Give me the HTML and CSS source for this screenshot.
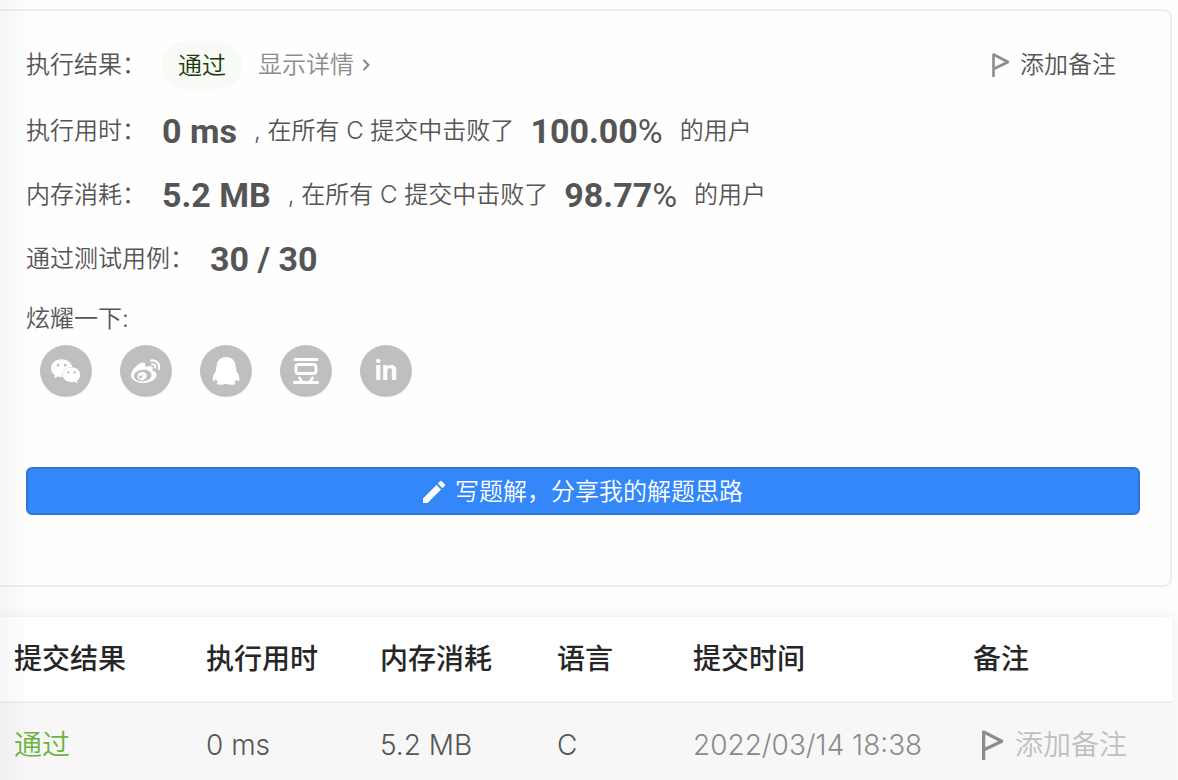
FILE: index.html
```html
<!DOCTYPE html>
<html lang="zh-CN">
<head>
    <meta charset="UTF-8">
    <meta name="viewport" content="width=device-width, initial-scale=1.0">
    <title>提交记录</title>
    <link rel="stylesheet" href="styles.css">
</head>
<body>
    <section class="result-card">
        <div class="result-header">
            <span class="label">执行结果：</span>
            <span class="status">通过</span>
            <a class="detail-link" href="#">显示详情
                <svg width="8" height="12" viewBox="0 0 8 12"><path d="M1.5 1l5 5-5 5"/></svg>
            </a>
            <button class="note-button" type="button">
                <svg class="flag" viewBox="0 0 18 24"><path d="M1.5 24V1.5L16 9 1.5 16"/></svg>
                添加备注
            </button>
        </div>

        <div class="result-row">
            <span class="label">执行用时：</span>
            <strong class="value">0 ms</strong>
            <span class="text">, 在所有 C 提交中击败了</span>
            <strong class="value">100.00<span class="percent">%</span></strong>
            <span>的用户</span>
        </div>
        <div class="result-row">
            <span class="label">内存消耗：</span>
            <strong class="value">5.2 MB</strong>
            <span class="text">, 在所有 C 提交中击败了</span>
            <strong class="value">98.77<span class="percent">%</span></strong>
            <span>的用户</span>
        </div>
        <div class="result-row">
            <span class="label cases">通过测试用例：</span>
            <strong class="value">30 / 30</strong>
        </div>

        <p class="share-title">炫耀一下:</p>
        <div class="share-list">
            <a class="share-item" href="#" aria-label="微信">
                <svg viewBox="0 0 52 52"><path transform="translate(11 11.5) scale(1.22)" d="M8.691 2.188C3.891 2.188 0 5.476 0 9.53c0 2.212 1.17 4.203 3.002 5.55a.59.59 0 0 1 .213.665l-.39 1.48c-.019.07-.048.141-.048.213 0 .163.13.295.29.295a.326.326 0 0 0 .167-.054l1.903-1.114a.864.864 0 0 1 .717-.098 10.16 10.16 0 0 0 2.837.403c.276 0 .543-.027.811-.05-.857-2.578.157-4.972 1.932-6.446 1.703-1.415 3.882-1.98 5.853-1.838-.576-3.583-4.196-6.348-8.596-6.348zM5.785 5.991c.642 0 1.162.529 1.162 1.18a1.17 1.17 0 0 1-1.162 1.178A1.17 1.17 0 0 1 4.623 7.17c0-.651.52-1.18 1.162-1.18zm5.813 0c.642 0 1.162.529 1.162 1.18a1.17 1.17 0 0 1-1.162 1.178 1.17 1.17 0 0 1-1.162-1.178c0-.651.52-1.18 1.162-1.18zm5.34 2.867c-1.797-.052-3.746.512-5.28 1.786-1.72 1.428-2.687 3.72-1.78 6.22.942 2.453 3.666 4.229 6.884 4.229.826 0 1.622-.12 2.361-.336a.722.722 0 0 1 .598.082l1.584.926a.272.272 0 0 0 .14.047c.134 0 .24-.111.24-.247 0-.06-.023-.12-.038-.177l-.327-1.233a.582.582 0 0 1-.023-.156.49.49 0 0 1 .201-.398C23.024 18.48 24 16.82 24 14.98c0-3.21-2.931-5.837-6.656-6.088V8.89c-.135-.01-.27-.027-.407-.03zm-2.53 3.274c.535 0 .969.44.969.982a.976.976 0 0 1-.969.983.976.976 0 0 1-.969-.983c0-.542.434-.982.97-.982zm4.844 0c.535 0 .969.44.969.982a.976.976 0 0 1-.969.983.976.976 0 0 1-.969-.983c0-.542.434-.982.969-.982z"/></svg>
            </a>
            <a class="share-item" href="#" aria-label="微博">
                <svg viewBox="0 0 52 52"><path transform="translate(11 11.5) scale(1.22)" d="M10.098 20.323c-3.977.391-7.414-1.406-7.672-4.02-.259-2.609 2.759-5.047 6.74-5.441 3.979-.394 7.413 1.404 7.671 4.018.259 2.6-2.759 5.049-6.737 5.439l-.002.004zM9.05 17.219c-.384.616-1.208.884-1.829.602-.612-.279-.793-.991-.406-1.593.379-.595 1.176-.861 1.793-.601.622.263.82.972.442 1.592zm1.27-1.627c-.141.237-.449.353-.689.253-.236-.09-.313-.361-.177-.586.138-.227.436-.346.672-.24.239.09.315.36.18.601l.014-.028zm.176-2.719c-1.893-.493-4.033.45-4.857 2.118-.836 1.704-.026 3.591 1.886 4.21 1.983.64 4.318-.341 5.132-2.179.8-1.793-.201-3.642-2.161-4.149zm7.563-1.224c-.346-.105-.57-.18-.405-.615.375-.977.42-1.804 0-2.404-.781-1.112-2.915-1.053-5.364-.03 0 0-.766.331-.571-.271.376-1.217.315-2.224-.27-2.809-1.338-1.337-4.869.045-7.888 3.08C1.309 10.87 0 13.273 0 15.348c0 3.981 5.099 6.395 10.086 6.395 6.536 0 10.888-3.801 10.888-6.82 0-1.822-1.547-2.854-2.915-3.284v.01zm1.908-5.092c-.766-.856-1.908-1.187-2.96-.962-.436.09-.706.511-.616.932.09.42.511.691.932.602.511-.105 1.067.044 1.442.465.376.421.466.977.316 1.473-.136.406.089.856.51.992.405.119.857-.105.992-.512.33-1.021.12-2.178-.646-3.035l.03.045zm2.418-2.195c-1.576-1.757-3.905-2.419-6.054-1.968-.496.104-.812.587-.706 1.081.104.496.586.813 1.082.707 1.532-.331 3.185.15 4.296 1.383 1.112 1.246 1.429 2.943.947 4.416-.165.48.106 1.007.586 1.157.479.165.991-.104 1.157-.586.675-2.088.241-4.478-1.338-6.235l.03.045z"/></svg>
            </a>
            <a class="share-item" href="#" aria-label="QQ">
                <svg viewBox="0 0 52 52"><path d="M26 12c-5.5 0-9.3 3.8-9.3 9 0 1-.8 1.5-.8 3 0 .8.2 1.2.1 1.8-1.9 2.6-3.2 5.3-3.2 7.9 0 1.6.5 2.5 1 2.5.8 0 1.7-1.3 2.1-2.1.4 1.400 1.200 2.600 2.300 3.600-1.300.5-1.700.7-1.700 1.100.8 1.200 6.900 1.400 9.600-.4 2.700 1.800 8.800 1.600 9.500.3 0-.5-.5-.7-1.600-1.100 1.100-1 1.800-2.100 2.200-3.400.4.8 1.200 2 2 2 .6 0 1.200-.9 1.200-2.500 0-2.600-1.300-5.300-3.200-7.900-.1-.6.1-1 .1-1.800 0-1.500-.8-2-.8-3 0-5.200-3.900-9-9.500-9z"/></svg>
            </a>
            <a class="share-item" href="#" aria-label="豆瓣">
                <svg class="stroke" viewBox="0 0 52 52">
                    <path d="M15 14.500h22"/>
                    <rect x="16" y="19.500" width="20" height="9" rx="2.500"/>
                    <path d="M14.300 37.500h23.400M19.500 33l2.500 4M32.500 33l-2.500 4"/>
                </svg>
            </a>
            <a class="share-item linkedin" href="#">in</a>
        </div>

        <button class="write-button" type="button">
            <svg width="22" height="22" viewBox="3 3 18 18"><path d="M3 17.25V21h3.75L17.81 9.94l-3.75-3.75L3 17.25zM20.71 7.04a1 1 0 0 0 0-1.41l-2.34-2.34a1 1 0 0 0-1.41 0l-1.83 1.83 3.75 3.75 1.83-1.83z"/></svg>
            写题解，分享我的解题思路
        </button>
    </section>

    <table class="submissions">
        <colgroup>
            <col class="col-result">
            <col class="col-time">
            <col class="col-memory">
            <col class="col-lang">
            <col class="col-date">
            <col>
        </colgroup>
        <thead>
            <tr>
                <th>提交结果</th>
                <th>执行用时</th>
                <th>内存消耗</th>
                <th>语言</th>
                <th>提交时间</th>
                <th>备注</th>
            </tr>
        </thead>
        <tbody>
            <tr>
                <td><a class="accepted" href="#">通过</a></td>
                <td>0 ms</td>
                <td>5.2 MB</td>
                <td>C</td>
                <td class="date">2022/03/14 18:38</td>
                <td>
                    <button class="note-button" type="button">
                        <svg class="flag" viewBox="0 0 18 24"><path d="M1.5 24V1.5L16 9 1.5 16"/></svg>
                        添加备注
                    </button>
                </td>
            </tr>
        </tbody>
    </table>
</body>
</html>
```

FILE: styles.css
```css
* {
    margin: 0;
    padding: 0;
    box-sizing: border-box;
}

body {
    padding: 9px 6px 0 0;
    background: #fefefe;
    color: #555;
    font-family: Inter, 'Noto Sans CJK SC', sans-serif;
    font-size: 24px;
    font-weight: 350;
    line-height: 36px;
    overflow: hidden;
}

/* Sombra del panel izquierdo */
body::before {
    content: '';
    position: fixed;
    z-index: 1;
    top: 0;
    bottom: 0;
    left: 0;
    width: 30px;
    background: linear-gradient(to right, rgba(0, 0, 0, 0.03), rgba(0, 0, 0, 0));
    pointer-events: none;
}

a {
    color: inherit;
    text-decoration: none;
}

button {
    border: none;
    background: none;
    color: inherit;
    font: inherit;
    cursor: pointer;
}

.result-card {
    padding: 30px 30px 70px 26px;
    border: 2px solid #eee;
    border-left: none;
    border-radius: 0 8px 8px 0;
}

.result-header {
    display: flex;
    align-items: center;
    height: 48px;
    margin-bottom: 10px;
}

.label {
    width: 136px;
    white-space: nowrap;
}

.label.cases {
    width: 184px;
}

.status {
    padding: 7px 16px 5px;
    border-radius: 24px;
    background: #f7faf5;
    color: #1c3a0a;
}

.detail-link {
    display: flex;
    align-items: center;
    gap: 8px;
    margin-left: 16px;
    color: #8c8c8c;
}

.detail-link svg {
    fill: none;
    stroke: #858585;
    stroke-width: 2;
}

.note-button {
    display: flex;
    align-items: center;
    gap: 10px;
}

.result-header .note-button {
    margin-left: auto;
    margin-right: 24px;
}

.flag {
    width: 18px;
    height: 24px;
    fill: none;
    stroke: #8c8c8c;
    stroke-width: 2.6;
    stroke-linejoin: round;
}

.result-row {
    display: flex;
    align-items: center;
    height: 64px;
    white-space: nowrap;
}

.value {
    margin-right: 17px;
    font-family: Roboto, sans-serif;
    font-size: 34px;
    font-weight: 700;
}

.text {
    margin-right: 16px;
}

.percent {
    font-weight: 400;
}

.share-title {
    margin-top: 10px;
}

.share-list {
    display: flex;
    gap: 28px;
    margin: 8px 0 70px 14px;
}

.share-item {
    width: 52px;
    height: 52px;
    border-radius: 50%;
    background: #bfbfbf;
    color: #fff;
}

.share-item svg {
    display: block;
    fill: #fff;
}

.share-item .stroke {
    fill: none;
    stroke: #fff;
    stroke-width: 2.8;
    stroke-linecap: round;
}

.linkedin {
    font-family: Roboto, sans-serif;
    font-size: 28px;
    font-weight: 700;
    line-height: 52px;
    text-align: center;
}

.write-button {
    display: flex;
    justify-content: center;
    align-items: center;
    gap: 10px;
    width: 100%;
    height: 48px;
    padding-top: 2px;
    border: 2px solid #2f74d0;
    border-radius: 6px;
    background: #3387f9;
    color: #fff;
}

.write-button svg {
    fill: #fff;
}

/* Tabla de envíos */
.submissions {
    width: 100%;
    margin-top: 30px;
    border-collapse: collapse;
    table-layout: fixed;
    background: #fff;
    box-shadow: 0 0 16px rgba(0, 0, 0, 0.08);
    font-size: 28px;
    text-align: left;
    white-space: nowrap;
}

.submissions th,
.submissions td {
    height: 85px;
    padding-left: 14px;
}

.submissions th {
    border-bottom: 2px solid #eee;
    color: #262626;
    font-weight: 500;
}

.submissions tbody tr {
    background: #f7f7f7;
}

.col-result {
    width: 192px;
}

.col-time {
    width: 174px;
}

.col-memory {
    width: 177px;
}

.col-lang {
    width: 136px;
}

.col-date {
    width: 280px;
}

.accepted {
    color: #6db33f;
}

.submissions .date {
    color: #8a8a8e;
}

.submissions .note-button {
    margin-left: 8px;
    color: #bfbfbf;
}

.submissions .flag {
    width: 24px;
    height: 30px;
}
```
